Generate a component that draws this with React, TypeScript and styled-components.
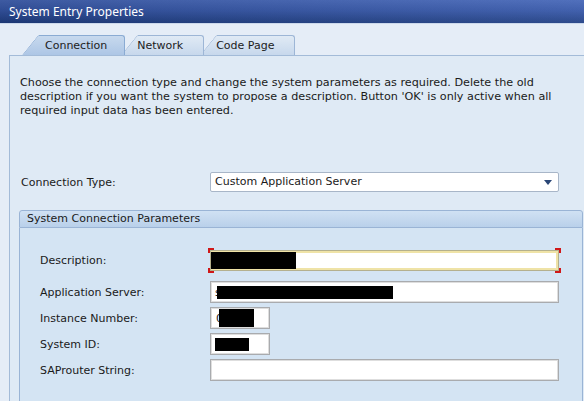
import * as React from "react";
import styled, { createGlobalStyle, css } from "styled-components";

const GlobalStyle = createGlobalStyle`
  html, body {
    margin: 0;
    padding: 0;
  }
  body {
    background: #e5edf7;
    font-family: "DejaVu Sans", "Liberation Sans", sans-serif;
    font-size: 11px;
    color: #1a1a1a;
  }
`;

const Window = styled.div`
  width: 584px;
  height: 401px;
  overflow: hidden;
  display: flex;
  flex-direction: column;
  background: #e5edf7;
`;

const TitleBar = styled.div`
  flex: 0 0 23px;
  display: flex;
  align-items: center;
  padding-left: 9px;
  color: #ffffff;
  font-family: "Noto Sans", "Open Sans", sans-serif;
  font-size: 12px;
  background: linear-gradient(to right, rgba(0, 0, 0, 0.12), rgba(255, 255, 255, 0.06)),
    linear-gradient(to bottom, #4667b8 0%, #3657a8 45%, #203f84 100%);
  border-bottom: 1px solid #cbd8eb;
`;

const Body = styled.div`
  flex: 1;
  display: flex;
  flex-direction: column;
  padding-top: 11px;
`;

const TabStrip = styled.div`
  display: flex;
  height: 20px;
  padding-left: 22px;
`;

const tabColors = {
  active: { border: "#8aabd3", top: "#c7d9ee", bottom: "#adc6e5" },
  idle: { border: "#9db6d6", top: "#e0eaf5", bottom: "#c7d8ec" },
};

const Tab = styled.div<{ $active?: boolean; $z: number }>`
  position: relative;
  z-index: ${(p) => p.$z};
  height: 20px;
  box-sizing: border-box;
  padding: 0 ${(p) => (p.$active ? "18px 0 23px" : "21px 0 16px")};
  line-height: 21px;
  white-space: nowrap;
  color: #1c1c1c;
  & + & {
    margin-left: -4px;
  }

  ${(p) => {
    const c = p.$active ? tabColors.active : tabColors.idle;
    return css`
      &::before,
      &::after {
        content: "";
        position: absolute;
        box-sizing: border-box;
        z-index: -1;
        background: linear-gradient(to bottom, ${c.top}, ${c.bottom});
        border-top: 1px solid ${c.border};
      }
      &::before {
        left: 0;
        bottom: 0;
        width: 24px;
        height: 20px;
        border-left: 1px solid ${c.border};
        border-top-left-radius: 2px;
        transform-origin: bottom left;
        transform: skewX(-39deg);
      }
      &::after {
        left: 17px;
        right: 0;
        top: 0;
        bottom: 0;
        border-right: 1px solid ${c.border};
        border-top-right-radius: 3px;
      }
    `;
  }}
`;

const Panel = styled.div`
  flex: 1;
  margin-left: 9px;
  width: 600px;
  box-sizing: border-box;
  background: #dfeaf5;
  border-left: 1px solid #a3bbd8;
  border-top: 1px solid #a3bbd8;
  padding: 20px 0 0 10px;
`;

const Intro = styled.p`
  margin: 0;
  font-size: 11.2px;
  line-height: 14px;
  white-space: nowrap;
`;

const FormRow = styled.div<{ $label: number }>`
  display: grid;
  grid-template-columns: ${(p) => p.$label}px auto;
  align-items: center;
  height: 22px;
`;

const TypeRow = styled(FormRow)`
  margin-top: 54px;
  height: 20px;
`;

const Label = styled.span<{ $indent?: number }>`
  padding-left: ${(p) => p.$indent ?? 0}px;
  white-space: nowrap;
`;

const Select = styled.div`
  position: relative;
  width: 349px;
  height: 20px;
  box-sizing: border-box;
  border: 1px solid #a8b6c8;
  border-radius: 2px;
  background: #ffffff;
  padding-left: 4px;
  line-height: 18px;

  &::after {
    content: "";
    position: absolute;
    right: 6px;
    top: 7px;
    border-left: 4px solid transparent;
    border-right: 4px solid transparent;
    border-top: 5px solid #2a4676;
  }
`;

const Group = styled.section`
  margin: 18px 0 0 -1px;
  width: 564px;
  display: flex;
  flex-direction: column;
  flex: 1;
`;

const GroupHeader = styled.header`
  height: 18px;
  box-sizing: border-box;
  border: 1px solid #9ab4d5;
  border-radius: 3px 3px 0 0;
  background: linear-gradient(to bottom, #d0e1f3, #b9d0ea);
  padding-left: 7px;
  line-height: 16px;
`;

const GroupBody = styled.div`
  flex: 1;
  min-height: 200px;
  background: #d4e4f3;
  border-left: 1px solid #9ab4d5;
  border-right: 1px solid #9ab4d5;
  padding: 21px 0 0 20px;
  display: flex;
  flex-direction: column;
  gap: 4px;
`;

const bracket = "linear-gradient(#d01818, #d01818)";

const Field = styled.div<{ $width: number; $focused?: boolean }>`
  position: relative;
  width: ${(p) => p.$width}px;
  height: 22px;
  box-sizing: border-box;
  display: flex;
  align-items: center;
  background: #ffffff;
  border: 1px solid #a9abae;
  box-shadow: inset 0 0 0 1px #dedede;
  color: #1e1e1e;

  ${(p) =>
    p.$focused &&
    css`
      height: 21px;
      border-color: #b4b08e;
      box-shadow: inset 0 0 0 2px #efe3a7;
      &::before {
        content: "";
        position: absolute;
        inset: -3px -3px -3px -3px;
        pointer-events: none;
        background:
          ${bracket} left top / 6px 2px no-repeat,
          ${bracket} left top / 2px 5px no-repeat,
          ${bracket} left bottom / 6px 2px no-repeat,
          ${bracket} left bottom / 2px 5px no-repeat,
          ${bracket} right top / 6px 2px no-repeat,
          ${bracket} right top / 2px 5px no-repeat,
          ${bracket} right bottom / 6px 2px no-repeat,
          ${bracket} right bottom / 2px 5px no-repeat;
      }
    `}
`;

const Peek = styled.span<{ $pad: number }>`
  padding-left: ${(p) => p.$pad}px;
  line-height: 1;
`;

const Redact = styled.span<{ $w: number; $h: number; $shift?: number }>`
  display: block;
  width: ${(p) => p.$w}px;
  height: ${(p) => p.$h}px;
  margin-left: ${(p) => p.$shift ?? 0}px;
  background: #000000;
`;

const DescRow = styled(FormRow)`
  margin-bottom: 6px;
`;

const App = () => {
  return (
    <>
      <GlobalStyle />
      <Window>
        <TitleBar>System Entry Properties</TitleBar>
        <Body>
          <TabStrip>
            <Tab $active $z={3}>
              Connection
            </Tab>
            <Tab $z={2}>Network</Tab>
            <Tab $z={1}>Code Page</Tab>
          </TabStrip>
          <Panel>
            <Intro>
              Choose the connection type and change the system parameters as required. Delete the old
              <br />
              description if you want the system to propose a description. Button 'OK' is only active when all
              <br />
              required input data has been entered.
            </Intro>
            <TypeRow $label={190}>
              <Label $indent={1}>Connection Type:</Label>
              <Select>Custom Application Server</Select>
            </TypeRow>
            <Group>
              <GroupHeader>System Connection Parameters</GroupHeader>
              <GroupBody>
                <DescRow $label={170}>
                  <Label>Description:</Label>
                  <Field $width={349} $focused>
                    <Redact $w={85} $h={17} />
                  </Field>
                </DescRow>
                <FormRow $label={170}>
                  <Label>Application Server:</Label>
                  <Field $width={349}>
                    <Peek $pad={4}>s</Peek>
                    <Redact $w={176} $h={13} $shift={-4} />
                  </Field>
                </FormRow>
                <FormRow $label={170}>
                  <Label>Instance Number:</Label>
                  <Field $width={60}>
                    <Peek $pad={5}>0</Peek>
                    <Redact $w={35} $h={18} $shift={-4} />
                  </Field>
                </FormRow>
                <FormRow $label={170}>
                  <Label>System ID:</Label>
                  <Field $width={60}>
                    <Redact $w={34} $h={13} $shift={4} />
                  </Field>
                </FormRow>
                <FormRow $label={170}>
                  <Label>SAProuter String:</Label>
                  <Field $width={349} />
                </FormRow>
              </GroupBody>
            </Group>
          </Panel>
        </Body>
      </Window>
    </>
  );
};

export default App;
